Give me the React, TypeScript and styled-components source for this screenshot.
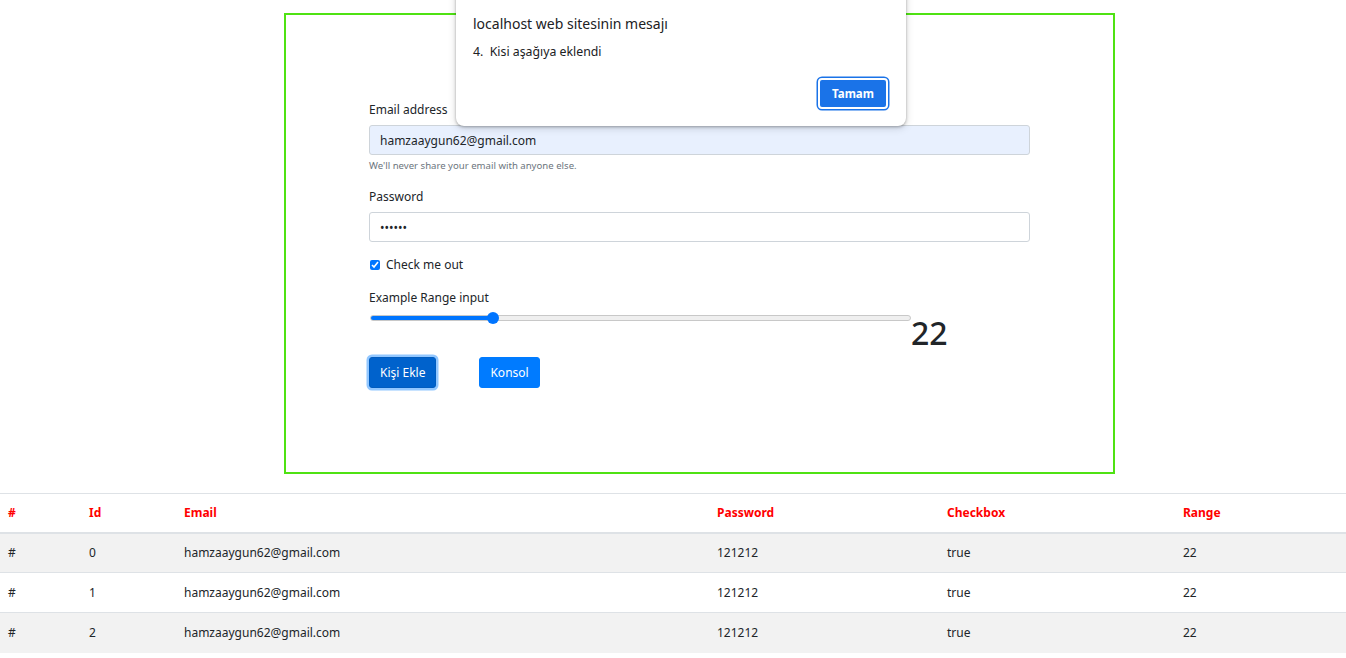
import React, { useState } from "react";
import styled, { createGlobalStyle } from "styled-components";

const GlobalStyle = createGlobalStyle`
  * { box-sizing: border-box; }
  body {
    margin: 0;
    font-family: "Noto Sans", "Open Sans", Arial, sans-serif;
    font-size: 12px;
    color: #212529;
    background: #fff;
    overflow: hidden;
  }
`;

const Page = styled.div`
  position: relative;
  width: 1346px;
  height: 658px;
  padding-top: 13px;
`;

const FormBox = styled.div`
  margin-left: 284px;
  width: 831px;
  height: 461px;
  border: 2px solid #4fe213;
  padding: 85px 83px 0 83px;
`;

const Field = styled.div<{ $gap?: number }>`
  margin-bottom: ${(p) => p.$gap ?? 13}px;
`;

const Label = styled.label`
  display: block;
  line-height: 19px;
  margin-bottom: 6px;
`;

const TextInput = styled.input<{ $autofill?: boolean }>`
  display: block;
  width: 661px;
  height: 30px;
  padding: 0 10px;
  font-family: inherit;
  font-size: 12px;
  color: #212529;
  border: 1px solid #ced4da;
  border-radius: 3px;
  background: ${(p) => (p.$autofill ? "#e8f0fe" : "#fff")};
  outline: none;
`;

const Hint = styled.small`
  display: block;
  margin-top: 4px;
  font-size: 9.6px;
  color: #6c757d;
`;

const CheckRow = styled.div`
  display: flex;
  align-items: center;
  gap: 6px;
  margin: 14px 0 15px 1px;
`;

const Check = styled.input`
  width: 10px;
  height: 10px;
  margin: 0;
  accent-color: #0075ff;
`;

const RangeRow = styled.div`
  display: flex;
  align-items: flex-start;
`;

const Range = styled.input`
  -webkit-appearance: none;
  appearance: none;
  width: 541px;
  height: 6px;
  margin: 2px 0 0 1px;
  border: 1px solid #c8c8c8;
  border-radius: 3px;
  outline: none;
  &::-webkit-slider-thumb {
    -webkit-appearance: none;
    width: 12px;
    height: 12px;
    border-radius: 50%;
    background: #0075ff;
    border: none;
  }
`;

const RangeValue = styled.span`
  font-size: 32px;
  line-height: 32px;
  font-weight: 500;
  margin-top: 4px;
  color: #212529;
`;

const Buttons = styled.div`
  display: flex;
  gap: 43px;
  margin-top: 8px;
`;

const Btn = styled.button<{ $focused?: boolean }>`
  height: 31px;
  padding: 0 10px;
  font-family: inherit;
  font-size: 12px;
  color: #fff;
  border: 1px solid ${(p) => (p.$focused ? "#005cbf" : "#007bff")};
  border-radius: 3px;
  background: ${(p) => (p.$focused ? "#0062cc" : "#007bff")};
  box-shadow: ${(p) => (p.$focused ? "0 0 0 2.5px rgba(38,143,255,0.5)" : "none")};
`;

const Table = styled.table`
  width: 100%;
  margin-top: 19px;
  border-collapse: collapse;
  table-layout: fixed;
`;

const Th = styled.th`
  text-align: left;
  color: #ff0000;
  font-weight: 700;
  height: 39px;
  padding: 0 8px;
  border-top: 1px solid #dee2e6;
  border-bottom: 2px solid #dee2e6;
`;

const Tr = styled.tr<{ $striped?: boolean }>`
  background: ${(p) => (p.$striped ? "#f2f2f2" : "#fff")};
`;

const Td = styled.td`
  height: 40px;
  padding: 0 8px;
  border-top: 1px solid #dee2e6;
`;

const Dialog = styled.div`
  position: absolute;
  left: 456px;
  top: -20px;
  width: 450px;
  height: 146px;
  background: #fff;
  border-radius: 8px;
  box-shadow: 0 1px 3px rgba(0,0,0,0.3), 0 2px 8px rgba(0,0,0,0.15);
  padding: 34px 17px 0 17px;
  font-family: "Noto Sans", "Open Sans", Arial, sans-serif;
`;

const DialogTitle = styled.div`
  font-size: 14px;
  line-height: 20px;
  color: #202124;
`;

const DialogText = styled.div`
  margin-top: 9px;
  font-size: 12.3px;
  line-height: 18px;
  color: #202124;
  white-space: pre;
`;

const DialogActions = styled.div`
  display: flex;
  justify-content: flex-end;
  margin-top: 17px;
`;

const OkButton = styled.button`
  width: 70px;
  height: 31px;
  border-radius: 4px;
  border: 2px solid #fff;
  box-shadow: 0 0 0 1.5px #1a73e8;
  background: #1a73e8;
  color: #fff;
  font-family: inherit;
  font-size: 11.5px;
  font-weight: 700;
  margin-right: 1px;
`;

const rows = [0, 1, 2];

export default function App() {
  const [value] = useState(22);
  const pct = value;
  return (
    <Page>
      <GlobalStyle />
      <FormBox>
        <Field $gap={15}>
          <Label>Email address</Label>
          <TextInput $autofill defaultValue="hamzaaygun62@gmail.com" />
          <Hint>We'll never share your email with anyone else.</Hint>
        </Field>
        <Field $gap={0}>
          <Label>Password</Label>
          <TextInput type="password" defaultValue="121212" />
        </Field>
        <CheckRow>
          <Check type="checkbox" defaultChecked />
          <span>Check me out</span>
        </CheckRow>
        <Field $gap={0}>
          <Label>Example Range input</Label>
          <RangeRow>
            <Range
              type="range"
              min={0}
              max={100}
              defaultValue={value}
              style={{
                background: `linear-gradient(to right, #0075ff ${pct}%, #efefef ${pct}%)`,
              }}
            />
            <RangeValue>{value}</RangeValue>
          </RangeRow>
        </Field>
        <Buttons>
          <Btn $focused>Kişi Ekle</Btn>
          <Btn>Konsol</Btn>
        </Buttons>
      </FormBox>

      <Table>
        <colgroup>
          <col style={{ width: 81 }} />
          <col style={{ width: 95 }} />
          <col style={{ width: 533 }} />
          <col style={{ width: 230 }} />
          <col style={{ width: 236 }} />
          <col />
        </colgroup>
        <thead>
          <tr>
            <Th>#</Th>
            <Th>Id</Th>
            <Th>Email</Th>
            <Th>Password</Th>
            <Th>Checkbox</Th>
            <Th>Range</Th>
          </tr>
        </thead>
        <tbody>
          {rows.map((i) => (
            <Tr key={i} $striped={i % 2 === 0}>
              <Td>#</Td>
              <Td>{i}</Td>
              <Td>hamzaaygun62@gmail.com</Td>
              <Td>121212</Td>
              <Td>true</Td>
              <Td>22</Td>
            </Tr>
          ))}
        </tbody>
      </Table>

      <Dialog>
        <DialogTitle>localhost web sitesinin mesajı</DialogTitle>
        <DialogText>{"4.  Kisi aşağıya eklendi"}</DialogText>
        <DialogActions>
          <OkButton>Tamam</OkButton>
        </DialogActions>
      </Dialog>
    </Page>
  );
}
